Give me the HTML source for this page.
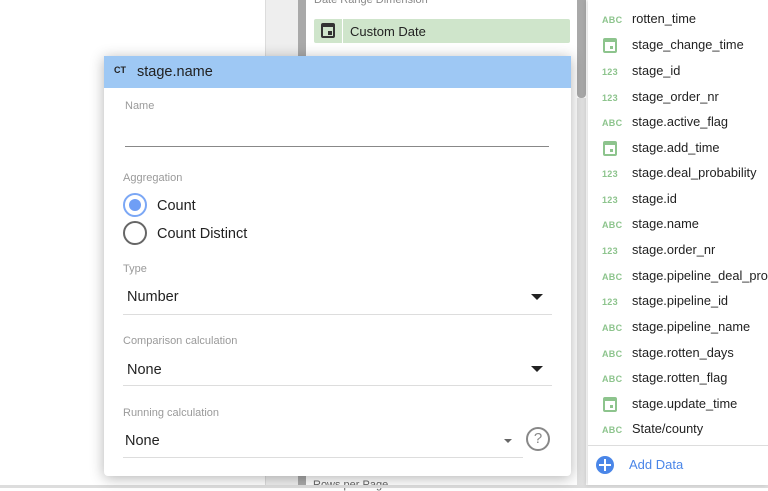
<!DOCTYPE html>
<html><head><style>
*{margin:0;padding:0;box-sizing:border-box}
body{width:768px;height:488px;overflow:hidden;background:#fff;font-family:"Liberation Sans",Arial,sans-serif;position:relative;color:#222}
.abs{position:absolute}
.lbl{position:absolute;font-size:11px;color:#9a9a9a}
.val{position:absolute;font-size:14.5px;color:#222}
.line{position:absolute;height:1px;background:#ddd}
.tri{position:absolute;width:0;height:0;border-left:6px solid transparent;border-right:6px solid transparent;border-top:6px solid #222}
#rp{position:absolute;left:588px;top:0;width:180px;height:485px;background:#fff;box-shadow:-2px 0 4px rgba(0,0,0,.12);overflow:hidden}
.item{position:absolute;left:12px;font-size:12.8px;color:#222;height:20px;line-height:20px}
.item .ic{position:absolute;left:2px;top:1px;width:20px;font-size:9px;font-weight:bold;color:#8dc48d;letter-spacing:0.3px}
.item .t{position:absolute;left:32px;white-space:nowrap}
.cal{position:absolute;left:3px;top:3px;width:14px;height:15px;border:2px solid #8dc48d;border-top-width:4px;border-radius:2px}
.cal:after{content:"";position:absolute;right:2px;bottom:2px;width:3px;height:3px;background:#8dc48d}
</style></head><body>
<div class="abs" style="left:265px;top:0;width:33px;height:488px;background:#eeeeee;border-left:1px solid #dcdcdc"></div>
<div class="abs" style="left:298px;top:0;width:8px;height:488px;background:#a9a9a9"></div>
<div class="abs" style="left:306px;top:0;width:272px;height:488px;background:#fff"></div>
<div class="abs" style="left:577px;top:0;width:9px;height:98px;background:#a9a9a9;border-radius:0 0 4px 4px"></div>
<div class="abs" style="left:577px;top:98px;width:9px;height:390px;background:#e0e0e0"></div>
<div class="abs" style="left:314px;top:-6px;font-size:11px;color:#888">Date Range Dimension</div>
<div class="abs" style="left:314px;top:19px;width:256px;height:24px;background:#cfe5cb;border-radius:2px"></div>
<div class="abs" style="left:342px;top:19px;width:1px;height:24px;background:#fff"></div>
<div class="abs" style="left:321px;top:23px;width:14px;height:15px;border:2px solid #333;border-top-width:4px;border-radius:2px"><div style="position:absolute;right:1px;bottom:1px;width:4px;height:4px;background:#333"></div></div>
<div class="abs" style="left:350px;top:24px;font-size:13px;color:#222">Custom Date</div>
<div class="abs" style="left:313px;top:479px;font-size:11px;color:#666">Rows per Page</div>
<div class="abs" style="left:0;top:485px;width:768px;height:3px;background:#ddd"></div>
<div id="rp">
<div class="item" style="top:9px"><span class="ic">ABC</span><span class="t">rotten_time</span></div>
<div class="item" style="top:35px"><span class="cal"></span><span class="t">stage_change_time</span></div>
<div class="item" style="top:61px"><span class="ic">123</span><span class="t">stage_id</span></div>
<div class="item" style="top:87px"><span class="ic">123</span><span class="t">stage_order_nr</span></div>
<div class="item" style="top:112px"><span class="ic">ABC</span><span class="t">stage.active_flag</span></div>
<div class="item" style="top:138px"><span class="cal"></span><span class="t">stage.add_time</span></div>
<div class="item" style="top:163px"><span class="ic">123</span><span class="t">stage.deal_probability</span></div>
<div class="item" style="top:189px"><span class="ic">123</span><span class="t">stage.id</span></div>
<div class="item" style="top:214px"><span class="ic">ABC</span><span class="t">stage.name</span></div>
<div class="item" style="top:240px"><span class="ic">123</span><span class="t">stage.order_nr</span></div>
<div class="item" style="top:266px"><span class="ic">ABC</span><span class="t">stage.pipeline_deal_probability</span></div>
<div class="item" style="top:291px"><span class="ic">123</span><span class="t">stage.pipeline_id</span></div>
<div class="item" style="top:317px"><span class="ic">ABC</span><span class="t">stage.pipeline_name</span></div>
<div class="item" style="top:343px"><span class="ic">ABC</span><span class="t">stage.rotten_days</span></div>
<div class="item" style="top:368px"><span class="ic">ABC</span><span class="t">stage.rotten_flag</span></div>
<div class="item" style="top:394px"><span class="cal"></span><span class="t">stage.update_time</span></div>
<div class="item" style="top:419px"><span class="ic">ABC</span><span class="t">State/county</span></div>
<div class="abs" style="left:0;top:445px;width:180px;height:1px;background:#ddd"></div>
<div class="abs" style="left:8px;top:456px;width:18px;height:18px;border-radius:50%;background:#4a86e8"></div>
<div class="abs" style="left:11px;top:464px;width:12px;height:2px;background:#fff"></div>
<div class="abs" style="left:16px;top:459px;width:2px;height:12px;background:#fff"></div>
<div class="abs" style="left:41px;top:457px;font-size:13px;color:#4a86e8">Add Data</div>
</div>
<div class="abs" style="left:104px;top:56px;width:467px;height:420px;background:#fff;border-radius:0 0 4px 4px;box-shadow:0 2px 14px rgba(0,0,0,.3)"></div>
<div class="abs" style="left:104px;top:56px;width:467px;height:32px;background:#9ec8f4"></div>
<div class="abs" style="left:114px;top:65px;font-size:9px;font-weight:bold;color:#222">CT</div>
<div class="abs" style="left:137px;top:64px;font-size:14.5px;color:#222">stage.name</div>
<div class="lbl" style="left:125px;top:100px">Name</div>
<div class="abs" style="left:125px;top:146px;width:424px;height:1px;background:#888"></div>
<div class="lbl" style="left:123px;top:172px">Aggregation</div>
<div class="abs" style="left:123px;top:193px;width:24px;height:24px;border-radius:50%;border:2px solid #7ba7f5"></div>
<div class="abs" style="left:129px;top:199px;width:12px;height:12px;border-radius:50%;background:#6f9ef5"></div>
<div class="val" style="left:157px;top:198px">Count</div>
<div class="abs" style="left:123px;top:221px;width:24px;height:24px;border-radius:50%;border:2px solid #666"></div>
<div class="val" style="left:157px;top:226px">Count Distinct</div>
<div class="lbl" style="left:123px;top:263px">Type</div>
<div class="val" style="left:127px;top:289px">Number</div>
<div class="tri" style="left:531px;top:294px"></div>
<div class="line" style="left:123px;top:314px;width:429px"></div>
<div class="lbl" style="left:123px;top:335px">Comparison calculation</div>
<div class="val" style="left:127px;top:362px">None</div>
<div class="tri" style="left:531px;top:366px"></div>
<div class="line" style="left:123px;top:385px;width:429px"></div>
<div class="lbl" style="left:123px;top:407px">Running calculation</div>
<div class="val" style="left:125px;top:433px">None</div>
<div class="tri" style="left:504px;top:439px;border-left-width:4px;border-right-width:4px;border-top:4px solid #666"></div>
<div class="abs" style="left:526px;top:427px;width:24px;height:24px;border-radius:50%;border:2px solid #888;color:#888;font-size:15px;text-align:center;line-height:20px">?</div>
<div class="line" style="left:123px;top:457px;width:400px"></div>
</body></html>
